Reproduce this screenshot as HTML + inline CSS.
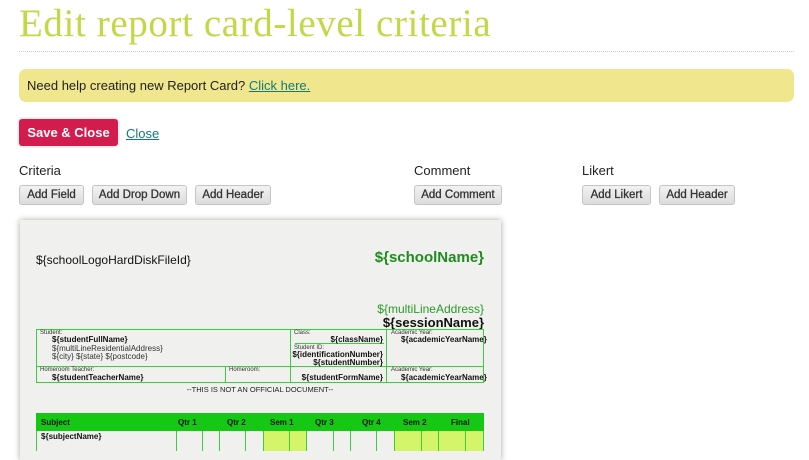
<!DOCTYPE html>
<html><head><meta charset="utf-8"><style>
*{box-sizing:border-box;margin:0;padding:0}
body{width:809px;height:448px;overflow:hidden;background:#fff;font-family:"Liberation Sans",sans-serif;position:relative;color:#222}
.a{position:absolute}
h1{position:absolute;left:19px;top:1px;font-family:"Liberation Serif",serif;font-weight:normal;font-size:39px;color:#c2d845;letter-spacing:0.6px}
.rule{left:19px;top:51px;width:775px;border-top:1px dotted #ccc}
.help{left:19px;top:69px;width:775px;height:33px;background:#efe68e;border-radius:7px;font-size:13px;padding:9px 0 0 8px}
a{color:#137a7a;text-decoration:underline}
.save{left:19px;top:119px;width:99px;height:27px;background:#d31c4e;border-radius:3px;color:#fff;font-weight:bold;font-size:13px;text-align:center;line-height:27px;box-shadow:0 0 0 2px #f0f0f0}
.lbl{font-size:13px;top:163px}
.btn{top:185px;height:20px;background:linear-gradient(#f2f2f2,#dcdcdc);border:1px solid #c4c4c4;border-radius:3px;font-size:11.5px;color:#333;text-align:center;line-height:18px;-webkit-text-stroke:0.3px #333}
.card{left:20px;top:220px;width:481px;height:240px;background:#f0f0ee;box-shadow:0 0 6px rgba(0,0,0,.35)}
.g{border:1.5px solid #3ccf3c}
.t{font-size:6px;color:#333}
.b{font-size:8px;font-weight:bold;color:#111}
.n{font-size:8px;color:#333}
</style></head><body>
<h1>Edit report card-level criteria</h1>
<div class="a rule"></div>
<div class="a help">Need help creating new Report Card? <a>Click here.</a></div>
<div class="a save">Save &amp; Close</div>
<div class="a" style="left:126px;top:126px;font-size:13px"><a>Close</a></div>
<div class="a lbl" style="left:19px">Criteria</div>
<div class="a lbl" style="left:414px">Comment</div>
<div class="a lbl" style="left:582px">Likert</div>
<div class="a btn" style="left:19px;width:65px">Add Field</div>
<div class="a btn" style="left:92px;width:95px">Add Drop Down</div>
<div class="a btn" style="left:195px;width:76px">Add Header</div>
<div class="a btn" style="left:414px;width:88px">Add Comment</div>
<div class="a btn" style="left:582px;width:69px">Add Likert</div>
<div class="a btn" style="left:659px;width:76px">Add Header</div>
<div class="a card"></div>
<div class="a" style="left:36px;top:253px;font-size:12px;color:#111">${schoolLogoHardDiskFileId}</div>
<div class="a" style="right:325px;top:249px;font-size:15px;font-weight:bold;color:#1e8c1e">${schoolName}</div>
<div class="a" style="right:325px;top:302px;font-size:12px;color:#2a9a2a">${multiLineAddress}</div>
<div class="a" style="right:325px;top:315px;font-size:13px;font-weight:bold;color:#111">${sessionName}</div>
<div class="a g" style="left:36px;top:329px;width:448px;height:38px"></div>
<div class="a g" style="left:36px;top:366px;width:448px;height:17px"></div>
<div class="a" style="left:290px;top:329px;border-left:1.5px solid #3ccf3c;height:54px"></div>
<div class="a" style="left:386px;top:329px;border-left:1.5px solid #3ccf3c;height:54px"></div>
<div class="a" style="left:225px;top:366px;border-left:1.5px solid #3ccf3c;height:17px"></div>
<div class="a" style="left:295px;top:343px;width:89px;border-top:1.5px solid #3ccf3c"></div>
<div class="a t" style="left:40px;top:330px">Student:</div>
<div class="a b" style="left:52px;top:335px">${studentFullName}</div>
<div class="a n" style="left:52px;top:344px">${multiLineResidentialAddress}</div>
<div class="a n" style="left:52px;top:352px">${city} ${state} ${postcode}</div>
<div class="a t" style="left:294px;top:330px">Class:</div>
<div class="a b" style="right:426px;top:335px">${className}</div>
<div class="a t" style="left:294px;top:345px">Student ID:</div>
<div class="a b" style="right:426px;top:350px">${identificationNumber}</div>
<div class="a b" style="right:426px;top:358px">${studentNumber}</div>
<div class="a t" style="left:391px;top:330px">Academic Year:</div>
<div class="a b" style="left:401px;top:335px">${academicYearName}</div>
<div class="a t" style="left:40px;top:367px">Homeroom Teacher:</div>
<div class="a b" style="left:52px;top:373px">${studentTeacherName}</div>
<div class="a t" style="left:229px;top:367px">Homeroom:</div>
<div class="a b" style="right:426px;top:373px">${studentFormName}</div>
<div class="a t" style="left:391px;top:367px">Academic Year:</div>
<div class="a b" style="left:401px;top:373px">${academicYearName}</div>
<div class="a" style="left:36px;width:448px;top:385px;text-align:center;font-size:7.5px;color:#222">--THIS IS NOT AN OFFICIAL DOCUMENT--</div>
<div class="a" style="left:36px;top:413px;width:448px;height:18px;background:#14c814"></div>
<div class="a" style="left:263px;top:431px;width:43px;height:20px;background:#d4f46a"></div>
<div class="a" style="left:394px;top:431px;width:90px;height:20px;background:#d4f46a"></div>
<div class="a" style="left:36px;top:431px;width:448px;height:20px;border-left:1.5px solid #3ccf3c;border-right:1.5px solid #3ccf3c"></div>
<div class="a" style="left:176px;top:431px;height:20px;width:0;border-left:1px solid #3ccf3c;box-shadow:26px 0 #3ccf3c,43px 0 #3ccf3c,69px 0 #3ccf3c,87px 0 #3ccf3c,113px 0 #3ccf3c,130px 0 #3ccf3c,157px 0 #3ccf3c,174px 0 #3ccf3c,200px 0 #3ccf3c,218px 0 #3ccf3c,245px 0 #3ccf3c,262px 0 #3ccf3c,289px 0 #3ccf3c"></div>
<div class="a b" style="left:41px;top:418px;font-size:8px">Subject</div>
<div class="a b" style="left:178px;top:418px">Qtr 1</div>
<div class="a b" style="left:227px;top:418px">Qtr 2</div>
<div class="a b" style="left:270px;top:418px">Sem 1</div>
<div class="a b" style="left:315px;top:418px">Qtr 3</div>
<div class="a b" style="left:362px;top:418px">Qtr 4</div>
<div class="a b" style="left:403px;top:418px">Sem 2</div>
<div class="a b" style="left:451px;top:418px">Final</div>
<div class="a b" style="left:41px;top:432px">${subjectName}</div>
</body></html>
